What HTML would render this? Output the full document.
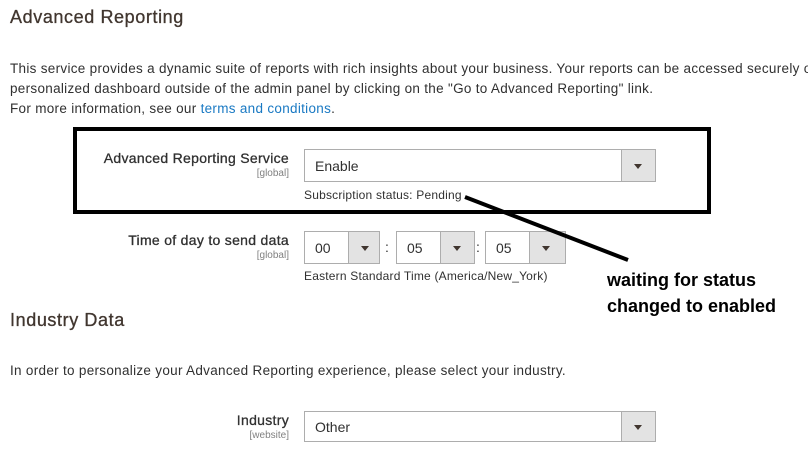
<!DOCTYPE html>
<html><head><style>
body{margin:0;width:808px;height:463px;background:#fff;position:relative;overflow:hidden;font-family:"Liberation Sans",sans-serif;color:#303030}
.a{position:absolute;white-space:nowrap}
h2{position:absolute;margin:0;font-weight:normal;font-size:18px;color:#41362f;left:10px;letter-spacing:0.6px;-webkit-text-stroke:0.3px #41362f}
.p{font-size:13.5px;color:#303030;line-height:20px;letter-spacing:0.3px}
.lbl{font-size:14px;color:#303030;text-align:right;right:519px;letter-spacing:0.3px;-webkit-text-stroke:0.3px #303030}
.sc{font-size:10px;color:#808080;text-align:right;right:519px}
.sel{position:absolute;border:1px solid #adadad;background:#fff;box-sizing:border-box;font-size:14px;color:#303030}
.sel span{position:absolute;left:10px;top:50%;transform:translateY(-50%)}
.sel b{position:absolute;right:0;top:0;bottom:0;width:33px;background:#e3e3e3;border-left:1px solid #adadad}
.sel b:after{content:"";position:absolute;left:12px;top:50%;margin-top:-2px;border-left:4px solid transparent;border-right:4px solid transparent;border-top:5px solid #41362f}
.note{font-size:12px;color:#303030;letter-spacing:0.2px}
</style></head><body>
<h2 style="top:7px">Advanced Reporting</h2>
<div class="a p" style="left:10px;top:59px">This service provides a dynamic suite of reports with rich insights about your business. Your reports can be accessed securely on a<br>personalized dashboard outside of the admin panel by clicking on the "Go to Advanced Reporting" link.<br>For more information, see our <span style="color:#1979c3">terms and conditions</span>.</div>

<div class="a lbl" style="top:150px">Advanced Reporting Service</div>
<div class="a sc" style="top:168px">[global]</div>
<div class="sel" style="left:304px;top:149px;width:352px;height:33px"><span>Enable</span><b></b></div>
<div class="a note" style="left:304px;top:188px">Subscription status: Pending</div>

<div style="position:absolute;left:73px;top:127px;width:638px;height:87px;border:4px solid #000;box-sizing:border-box"></div>

<div class="a lbl" style="top:232px">Time of day to send data</div>
<div class="a sc" style="top:250px">[global]</div>
<div class="sel" style="left:304px;top:231px;width:76px;height:33px"><span>00</span><b style="width:30px"></b></div>
<div class="a" style="left:385px;top:239px;font-size:14px">:</div>
<div class="sel" style="left:396px;top:231px;width:79px;height:33px"><span>05</span><b></b></div>
<div class="a" style="left:476px;top:239px;font-size:14px">:</div>
<div class="sel" style="left:485px;top:231px;width:81px;height:33px"><span>05</span><b style="width:35px"></b></div>
<div class="a note" style="left:304px;top:269px">Eastern Standard Time (America/New_York)</div>

<svg class="a" style="left:0;top:0" width="808" height="463"><line x1="465" y1="197" x2="628" y2="260" stroke="#000" stroke-width="4"/></svg>
<div class="a" style="left:607px;top:267px;font-size:18px;font-weight:bold;color:#000;line-height:26px">waiting for status<br>changed to enabled</div>

<h2 style="top:310px">Industry Data</h2>
<div class="a p" style="left:10px;top:361px">In order to personalize your Advanced Reporting experience, please select your industry.</div>
<div class="a lbl" style="top:412px">Industry</div>
<div class="a sc" style="top:430px">[website]</div>
<div class="sel" style="left:304px;top:411px;width:352px;height:31px"><span>Other</span><b></b></div>
</body></html>
